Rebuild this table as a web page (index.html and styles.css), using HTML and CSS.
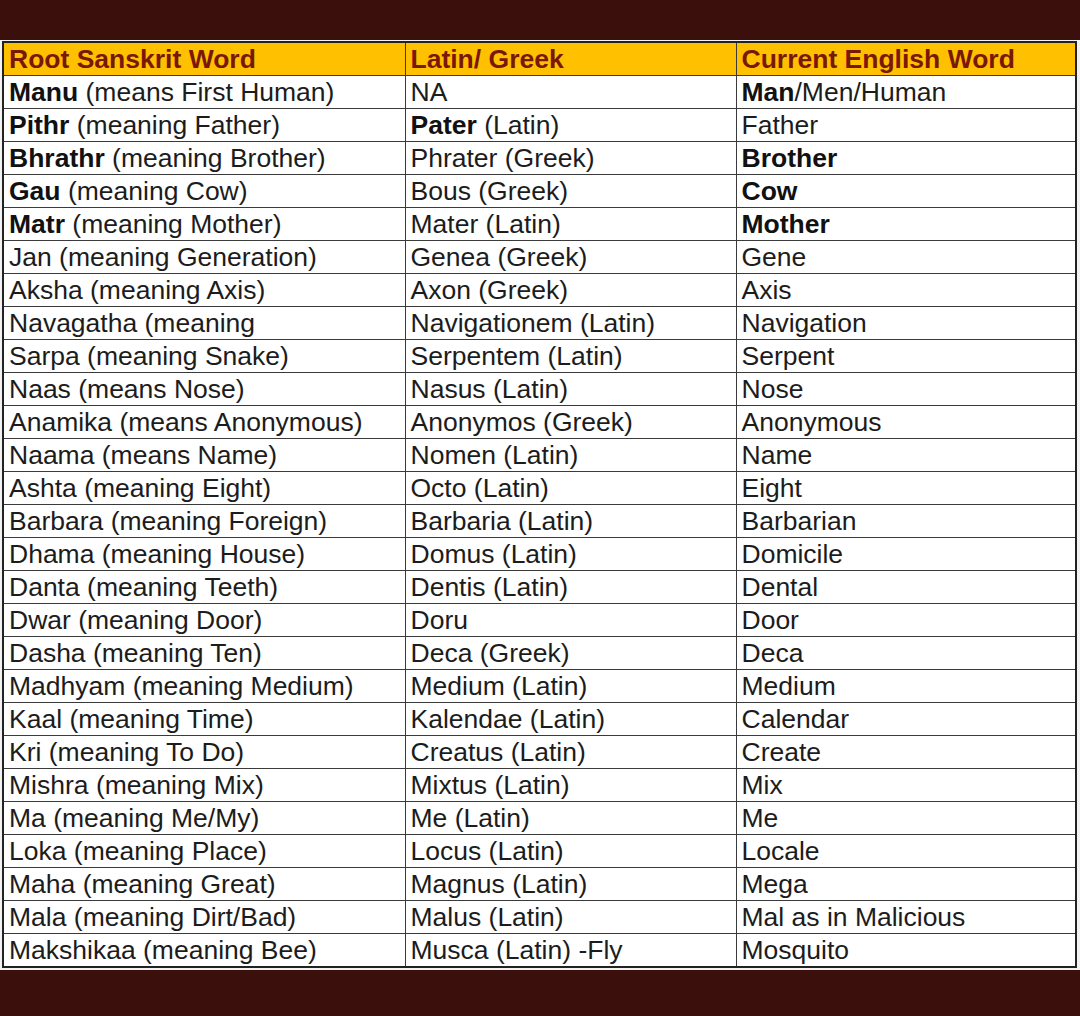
FILE: index.html
```html
<!DOCTYPE html>
<html>
<head>
<meta charset="utf-8">
<link rel="stylesheet" href="styles.css">
</head>
<body>
<div class="sheet">
<table class="words">
<colgroup><col class="c1"><col class="c2"><col class="c3"></colgroup>
<thead>
<tr><th>Root Sanskrit Word</th><th>Latin/ Greek</th><th>Current English Word</th></tr>
</thead>
<tbody>
<tr><td><b>Manu</b> (means First Human)</td><td>NA</td><td><b>Man</b>/Men/Human</td></tr>
<tr><td><b>Pithr</b> (meaning Father)</td><td><b>Pater</b> (Latin)</td><td>Father</td></tr>
<tr><td><b>Bhrathr</b> (meaning Brother)</td><td>Phrater (Greek)</td><td><b>Brother</b></td></tr>
<tr><td><b>Gau</b> (meaning Cow)</td><td>Bous (Greek)</td><td><b>Cow</b></td></tr>
<tr><td><b>Matr</b> (meaning Mother)</td><td>Mater (Latin)</td><td><b>Mother</b></td></tr>
<tr><td>Jan (meaning Generation)</td><td>Genea (Greek)</td><td>Gene</td></tr>
<tr><td>Aksha (meaning Axis)</td><td>Axon (Greek)</td><td>Axis</td></tr>
<tr><td>Navagatha (meaning</td><td>Navigationem (Latin)</td><td>Navigation</td></tr>
<tr><td>Sarpa (meaning Snake)</td><td>Serpentem (Latin)</td><td>Serpent</td></tr>
<tr><td>Naas (means Nose)</td><td>Nasus (Latin)</td><td>Nose</td></tr>
<tr><td>Anamika (means Anonymous)</td><td>Anonymos (Greek)</td><td>Anonymous</td></tr>
<tr><td>Naama (means Name)</td><td>Nomen (Latin)</td><td>Name</td></tr>
<tr><td>Ashta (meaning Eight)</td><td>Octo (Latin)</td><td>Eight</td></tr>
<tr><td>Barbara (meaning Foreign)</td><td>Barbaria (Latin)</td><td>Barbarian</td></tr>
<tr><td>Dhama (meaning House)</td><td>Domus (Latin)</td><td>Domicile</td></tr>
<tr><td>Danta (meaning Teeth)</td><td>Dentis (Latin)</td><td>Dental</td></tr>
<tr><td>Dwar (meaning Door)</td><td>Doru</td><td>Door</td></tr>
<tr><td>Dasha (meaning Ten)</td><td>Deca (Greek)</td><td>Deca</td></tr>
<tr><td>Madhyam (meaning Medium)</td><td>Medium (Latin)</td><td>Medium</td></tr>
<tr><td>Kaal (meaning Time)</td><td>Kalendae (Latin)</td><td>Calendar</td></tr>
<tr><td>Kri (meaning To Do)</td><td>Creatus (Latin)</td><td>Create</td></tr>
<tr><td>Mishra (meaning Mix)</td><td>Mixtus (Latin)</td><td>Mix</td></tr>
<tr><td>Ma (meaning Me/My)</td><td>Me (Latin)</td><td>Me</td></tr>
<tr><td>Loka (meaning Place)</td><td>Locus (Latin)</td><td>Locale</td></tr>
<tr><td>Maha (meaning Great)</td><td>Magnus (Latin)</td><td>Mega</td></tr>
<tr><td>Mala (meaning Dirt/Bad)</td><td>Malus (Latin)</td><td>Mal as in Malicious</td></tr>
<tr><td>Makshikaa (meaning Bee)</td><td>Musca (Latin) -Fly</td><td>Mosquito</td></tr>
</tbody>
</table>
</div>
</body>
</html>
```

FILE: styles.css
```css
html, body {
  margin: 0;
  padding: 0;
}
body {
  background: #3b0f0c;
  width: 1080px;
  height: 1016px;
  overflow: hidden;
  font-family: "Liberation Sans", Arial, sans-serif;
}
.sheet {
  margin-top: 40px;
  background: #f2f2f2;
  padding: 1px 3px 2px 2px;
}
.words {
  border-collapse: collapse;
  width: 1073px;
  table-layout: fixed;
  border: 2px solid #222;
  background: #fff;
}
.c1 { width: 402px; }
.c2 { width: 331px; }
.c3 { width: 340px; }
.words th,
.words td {
  border: 1px solid #3a3a3a;
  padding: 0 5px;
  height: 32px;
  line-height: 32px;
  font-size: 26.5px;
  text-align: left;
  white-space: nowrap;
  overflow: hidden;
  vertical-align: middle;
}
.words th {
  background: #ffc000;
  color: #7a1808;
  font-weight: bold;
}
.words td {
  color: #1c1c1c;
  font-weight: normal;
}
.words td b {
  font-weight: bold;
  color: #111;
}
```
